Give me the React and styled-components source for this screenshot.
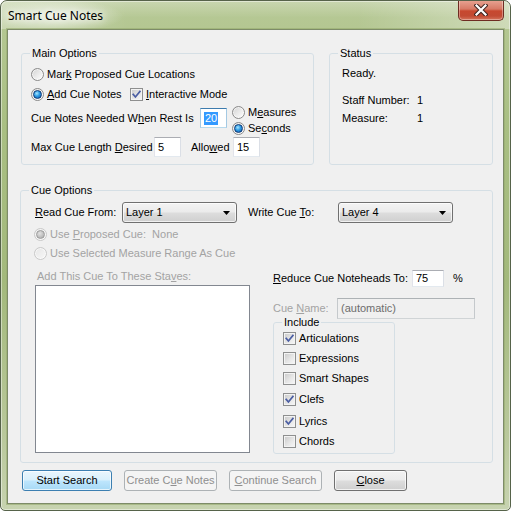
import React from 'react';
import styled, { createGlobalStyle } from 'styled-components';

const Global = createGlobalStyle`
  html, body { margin: 0; padding: 0; background: #ffffff; }
  body { font-family: "Liberation Sans", Arial, sans-serif; font-size: 11px; color: #000; }
  * { box-sizing: border-box; }
`;

const Window = styled.div`
  width: 511px;
  height: 511px;
  display: flex;
  flex-direction: column;
  border: 1px solid #56634a;
  border-radius: 7px 7px 5px 5px;
  overflow: hidden;
  box-shadow: inset 0 0 0 1px rgba(255,255,255,0.45);
  background: linear-gradient(180deg, #b7c996 0%, #a9bf83 25%, #a3b97c 55%, #b9c89b 85%, #c7d3b0 100%);
`;

const TitleBar = styled.div`
  height: 28px;
  flex: none;
  display: flex;
  align-items: flex-start;
  padding-left: 7px;
  background:
    radial-gradient(ellipse 90px 22px at 55px 15px, rgba(255,255,255,0.7), rgba(255,255,255,0) 75%),
    linear-gradient(90deg, rgba(255,255,255,0.3) 0%, rgba(255,255,255,0) 25%, rgba(255,255,255,0) 70%, rgba(255,255,255,0.35) 100%),
    linear-gradient(180deg, rgba(255,255,255,0.25), rgba(255,255,255,0) 60%);
`;

const TitleText = styled.span`
  margin-top: 7px;
  font-family: "Noto Sans", "Open Sans", sans-serif;
  font-size: 12px;
  line-height: 16px;
  color: #000;
  text-shadow: 0 0 6px rgba(255,255,255,0.9), 0 0 10px rgba(255,255,255,0.8);
`;

const CloseBtn = styled.div`
  margin-left: auto;
  margin-right: 6px;
  margin-top: -1px;
  width: 46px;
  height: 21px;
  border: 1px solid #6e2c22;
  border-top: none;
  border-radius: 0 0 5px 5px;
  background: linear-gradient(180deg, #e8a594 0%, #d77a66 45%, #c7482f 55%, #c24a33 80%, #d5745c 100%);
  box-shadow: inset 0 0 0 1px rgba(255,255,255,0.35);
  display: flex;
  align-items: center;
  justify-content: center;
`;

const Client = styled.div`
  flex: 1;
  margin: 0 6px 6px;
  border: 1px solid #7d8b69;
  box-shadow: 0 0 0 1px rgba(150,170,110,0.6);
  background: #f0f0f0;
  padding: 17px 10px 0 13px;
  display: flex;
  flex-direction: column;
`;

const TopRow = styled.div`
  display: flex;
  gap: 15px;
  height: 118px;
`;

const Group = styled.fieldset`
  margin: ${p => p.$mt || 0}px 0 0 ${p => p.$ml || 0}px;
  padding: 0;
  min-width: 0;
  border: 1px solid #d5dfe5;
  border-radius: 3px;
  width: ${p => p.$w}px;
  height: ${p => p.$h}px;
  flex: none;
`;

const Legend = styled.legend`
  margin-left: 8px;
  padding: 0 2px;
  font-size: 11px;
  line-height: 13px;
  height: 13px;
  color: #000;
`;

const Body = styled.div`
  display: flex;
  flex-direction: column;
  padding: ${p => p.$pt || 0}px 0 0 ${p => p.$pl || 0}px;
`;

const Row = styled.div`
  display: flex;
  align-items: ${p => p.$align || 'center'};
  height: ${p => p.$h}px;
  margin-top: ${p => p.$mt || 0}px;
  flex: none;
`;

const Text = styled.span`
  display: block;
  white-space: nowrap;
  line-height: 13px;
  color: ${p => (p.$disabled ? '#a3a3a3' : '#000')};
  width: ${p => (p.$w ? `${p.$w}px` : 'auto')};
  margin-left: ${p => p.$ml || 0}px;
  margin-top: ${p => p.$mt || 0}px;
  flex: none;
`;

const Key = styled.u`
  text-decoration: underline;
  text-underline-offset: 1px;
`;

const Option = styled.label`
  display: flex;
  align-items: center;
  gap: 3px;
  height: ${p => (p.$h ? `${p.$h}px` : 'auto')};
  width: ${p => (p.$w ? `${p.$w}px` : 'auto')};
  margin-left: ${p => p.$ml || 0}px;
  margin-top: ${p => p.$mt || 0}px;
  flex: none;
  color: ${p => (p.$disabled ? '#a3a3a3' : '#000')};
  white-space: nowrap;
`;

const RadioCircle = styled.span`
  width: 13px;
  height: 13px;
  border-radius: 50%;
  flex: none;
  border: 1px solid ${p => (p.$disabled ? '#c9c9c9' : '#8a8a8a')};
  background: ${p =>
    p.$disabled
      ? 'linear-gradient(135deg, #e6e6e6, #f7f7f7)'
      : 'linear-gradient(135deg, #d2d2d2 0%, #ececec 55%, #ffffff 100%)'};
  box-shadow: inset 0 0 0 1px rgba(255,255,255,0.6);
  display: flex;
  align-items: center;
  justify-content: center;
  &::after {
    content: '';
    display: ${p => (p.$checked ? 'block' : 'none')};
    width: 7px;
    height: 7px;
    border-radius: 50%;
    border: 1px solid ${p => (p.$disabled ? '#9c9c9c' : '#0e3a78')};
    background: ${p =>
      p.$disabled
        ? 'radial-gradient(circle at 40% 35%, #e2e2e2 0, #b2b2b2 80%)'
        : 'radial-gradient(circle at 40% 35%, #a8e6ff 0, #2c9be4 45%, #114f9e 100%)'};
  }
`;

const CheckBox = styled.span`
  width: 13px;
  height: 13px;
  flex: none;
  border: 1px solid #8e8f8f;
  background: linear-gradient(135deg, #c8c8c8 0%, #e6e6e6 55%, #f8f8f8 100%);
  box-shadow: inset 0 0 0 1px #f3f3f3;
  display: flex;
  align-items: center;
  justify-content: center;
`;

const Radio = ({ checked, disabled }) => <RadioCircle $checked={checked} $disabled={disabled} />;

const Check = ({ checked }) => (
  <CheckBox>
    {checked && (
      <svg width="9" height="9" viewBox="0 0 9 9">
        <path d="M1.2 4.4 L3.4 7 L7.9 1.4" fill="none" stroke="#4b5ea3" strokeWidth="1.7" strokeLinecap="square" />
      </svg>
    )}
  </CheckBox>
);

const Input = styled.div`
  width: ${p => p.$w}px;
  height: ${p => p.$h}px;
  margin-top: ${p => p.$mt || 0}px;
  flex: none;
  background: ${p => (p.$disabled ? '#f0f0f0' : '#fff')};
  border: 1px solid;
  border-color: ${p =>
    p.$focus
      ? '#3d7bad #a4c9e3 #b7d9ed #a4c9e3'
      : p.$disabled
      ? '#adb2b5 #c5c9cc #d0d4d6 #c5c9cc'
      : '#abadb3 #dbdfe6 #e3e9ef #e2e3ea'};
  display: flex;
  align-items: center;
  padding-left: 3px;
  color: ${p => (p.$disabled ? '#6d6d6d' : '#000')};
  white-space: nowrap;
  line-height: 13px;
`;

const Selected = styled.span`
  background: #3399ff;
  color: #fff;
  padding: 0 1px;
`;

const Stack = styled.div`
  display: flex;
  flex-direction: column;
  margin-left: ${p => p.$ml || 0}px;
`;

const StatusLine = styled.div`
  display: flex;
  align-items: center;
  height: ${p => p.$h}px;
  margin-top: ${p => p.$mt || 0}px;
`;

const Select = styled.div`
  width: 115px;
  height: 21px;
  flex: none;
  border: 1px solid #707070;
  border-radius: 3px;
  background: linear-gradient(180deg, #f3f3f3 0%, #ebebeb 48%, #dddddd 52%, #cfcfcf 100%);
  box-shadow: inset 0 0 0 1px rgba(255,255,255,0.7);
  display: flex;
  align-items: center;
  padding-left: 3px;
  line-height: 13px;
`;

const Arrow = styled.svg`
  margin-left: auto;
  margin-right: 6px;
`;

const Columns = styled.div`
  display: flex;
  gap: 23px;
  margin-top: 7px;
`;

const Column = styled.div`
  display: flex;
  flex-direction: column;
  width: ${p => p.$w}px;
  flex: none;
`;

const ListBox = styled.div`
  width: 215px;
  height: 168px;
  margin-top: 1px;
  background: #fff;
  border: 1px solid #828790;
`;

const ButtonRow = styled.div`
  display: flex;
  gap: 12px;
  margin-top: 7px;
  margin-left: 1px;
`;

const Button = styled.div`
  width: ${p => p.$w}px;
  height: 21px;
  border-radius: 3px;
  display: flex;
  align-items: center;
  justify-content: center;
  line-height: 13px;
  white-space: nowrap;
  border: 1px solid ${p => (p.$variant === 'default' ? '#3c7fb1' : p.$variant === 'disabled' ? '#adb2b5' : '#707070')};
  color: ${p => (p.$variant === 'disabled' ? '#8f8f8f' : '#000')};
  background: ${p =>
    p.$variant === 'default'
      ? 'linear-gradient(180deg, #eaf6fd 0%, #d9f0fc 48%, #bee6fd 52%, #a7d9f5 100%)'
      : p.$variant === 'disabled'
      ? '#f4f4f4'
      : 'linear-gradient(180deg, #f2f2f2 0%, #ebebeb 48%, #dddddd 52%, #cfcfcf 100%)'};
  box-shadow: ${p => (p.$variant === 'disabled' ? 'none' : 'inset 0 0 0 1px rgba(255,255,255,0.7)')};
`;

const includeItems = [
  { label: 'Articulations', checked: true, mt: 2 },
  { label: 'Expressions', checked: false, mt: 6 },
  { label: 'Smart Shapes', checked: false, mt: 6 },
  { label: 'Clefs', checked: true, mt: 7 },
  { label: 'Lyrics', checked: true, mt: 8 },
  { label: 'Chords', checked: false, mt: 6 },
];

const DownArrow = () => (
  <Arrow width="7" height="4" viewBox="0 0 7 4">
    <polygon points="0,0 7,0 3.5,4" fill="#000" />
  </Arrow>
);

export default function App() {
  return (
    <>
      <Global />
      <Window>
        <TitleBar>
          <TitleText>Smart Cue Notes</TitleText>
          <CloseBtn>
            <svg width="14" height="12" viewBox="0 0 14 12">
              <path d="M2.5 1.5 L11.5 10.5 M11.5 1.5 L2.5 10.5" stroke="#3e2420" strokeWidth="4.2" strokeLinecap="square" />
              <path d="M2.5 1.5 L11.5 10.5 M11.5 1.5 L2.5 10.5" stroke="#ffffff" strokeWidth="2.2" strokeLinecap="square" />
            </svg>
          </CloseBtn>
        </TitleBar>
        <Client>
          <TopRow>
            <Group $w={293} $h={118}>
              <Legend>Main Options</Legend>
              <Body $pt={6} $pl={9}>
                <Row $h={16}>
                  <Option>
                    <Radio />
                    <span>Mar<Key>k</Key> Proposed Cue Locations</span>
                  </Option>
                </Row>
                <Row $h={16} $mt={4}>
                  <Option $w={99}>
                    <Radio checked />
                    <span><Key>A</Key>dd Cue Notes</span>
                  </Option>
                  <Option>
                    <Check checked />
                    <span><Key>I</Key>nteractive Mode</span>
                  </Option>
                </Row>
                <Row $h={32} $mt={2} $align="flex-start">
                  <Text $w={169} $mt={8}>Cue Notes Needed W<Key>h</Key>en Rest Is</Text>
                  <Input $w={27} $h={20} $mt={4} $focus>
                    <Selected>20</Selected>
                  </Input>
                  <Stack $ml={5}>
                    <Option $h={16}>
                      <Radio />
                      <span>M<Key>e</Key>asures</span>
                    </Option>
                    <Option $h={16}>
                      <Radio checked />
                      <span>Se<Key>c</Key>onds</span>
                    </Option>
                  </Stack>
                </Row>
                <Row $h={20} $mt={1}>
                  <Text $w={123}>Max Cue Length <Key>D</Key>esired</Text>
                  <Input $w={27} $h={20}>5</Input>
                  <Text $w={42} $ml={10}>Allo<Key>w</Key>ed</Text>
                  <Input $w={27} $h={20}>15</Input>
                </Row>
              </Body>
            </Group>
            <Group $w={164} $h={118}>
              <Legend>Status</Legend>
              <Body $pt={7} $pl={12}>
                <StatusLine $h={13}>
                  <Text>Ready.</Text>
                </StatusLine>
                <StatusLine $h={18} $mt={11}>
                  <Text $w={75}>Staff Number:</Text>
                  <Text>1</Text>
                </StatusLine>
                <StatusLine $h={18}>
                  <Text $w={75}>Measure:</Text>
                  <Text>1</Text>
                </StatusLine>
              </Body>
            </Group>
          </TopRow>

          <Group $w={473} $h={279} $mt={19} $ml={-1}>
            <Legend>Cue Options</Legend>
            <Body $pt={5} $pl={14}>
              <Row $h={21}>
                <Text $w={87}><Key>R</Key>ead Cue From:</Text>
                <Select>
                  <span>Layer 1</span>
                  <DownArrow />
                </Select>
                <Text $w={90} $ml={11}>Write Cue <Key>T</Key>o:</Text>
                <Select>
                  <span>Layer 4</span>
                  <DownArrow />
                </Select>
              </Row>
              <Row $h={16} $mt={3}>
                <Option $ml={-1} $disabled>
                  <Radio checked disabled />
                  <span>Use <Key>P</Key>roposed Cue:&nbsp;&nbsp;None</span>
                </Option>
              </Row>
              <Row $h={16} $mt={3}>
                <Option $ml={-1} $disabled>
                  <Radio disabled />
                  <span>Use Selected Measure Range As Cue</span>
                </Option>
              </Row>
              <Columns>
                <Column $w={215}>
                  <Row $h={16}>
                    <Text $ml={2} $disabled>Add This Cue To These Sta<Key>v</Key>es:</Text>
                  </Row>
                  <ListBox />
                </Column>
                <Column $w={202}>
                  <Row $h={20}>
                    <Text $w={139}><Key>R</Key>educe Cue Noteheads To:</Text>
                    <Input $w={32} $h={17}>75</Input>
                    <Text $ml={9}>%</Text>
                  </Row>
                  <Row $h={21} $mt={10}>
                    <Text $w={64} $disabled>Cue <Key>N</Key>ame:</Text>
                    <Input $w={138} $h={21} $disabled>(automatic)</Input>
                  </Row>
                  <Group $w={122} $h={138} $mt={-3}>
                    <Legend>Include</Legend>
                    <Body $pl={9}>
                      {includeItems.map(item => (
                        <Option key={item.label} $h={14} $mt={item.mt}>
                          <Check checked={item.checked} />
                          <span>{item.label}</span>
                        </Option>
                      ))}
                    </Body>
                  </Group>
                </Column>
              </Columns>
            </Body>
          </Group>

          <ButtonRow>
            <Button $w={90} $variant="default">Start Search</Button>
            <Button $w={93} $variant="disabled">Create C<Key>u</Key>e Notes</Button>
            <Button $w={93} $variant="disabled"><Key>C</Key>ontinue Search</Button>
            <Button $w={73}><Key>C</Key>lose</Button>
          </ButtonRow>
        </Client>
      </Window>
    </>
  );
}
